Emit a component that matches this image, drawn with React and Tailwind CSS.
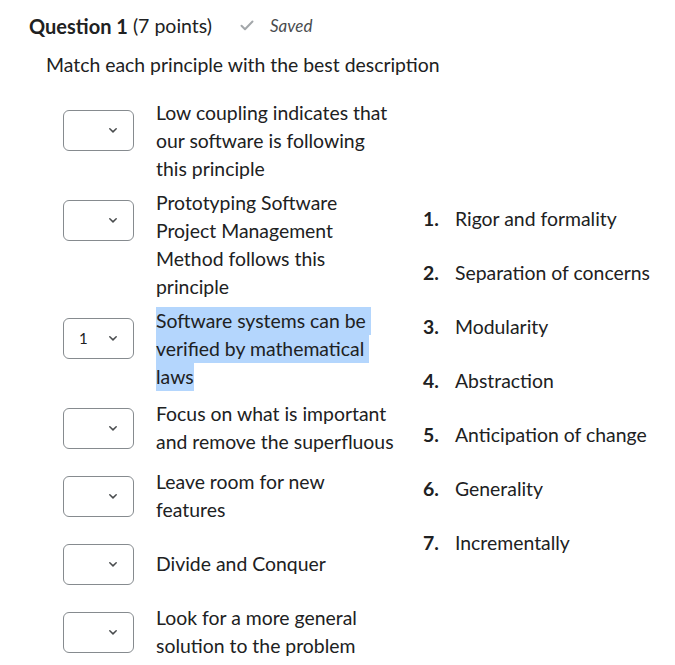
import React from "react";

const rows = [
  { value: "", text: "Low coupling indicates that our software is following this principle" },
  { value: "", text: "Prototyping Software Project Management Method follows this principle" },
  { value: "1", highlight: true },
  { value: "", text: "Focus on what is important and remove the superfluous" },
  { value: "", text: "Leave room for new features" },
  { value: "", text: "Divide and Conquer" },
  { value: "", text: "Look for a more general solution to the problem" },
];

const choices = [
  "Rigor and formality",
  "Separation of concerns",
  "Modularity",
  "Abstraction",
  "Anticipation of change",
  "Generality",
  "Incrementally",
];

const Chevron = () => (
  <svg width="10" height="7" viewBox="0 0 10 7" fill="none">
    <path d="M1.8 1.8 L5 4.9 L8.2 1.8" stroke="#494c4e" strokeWidth="1.5" strokeLinecap="round" strokeLinejoin="round" />
  </svg>
);

const FakeSelect = ({ value }) => (
  <div className="w-[71px] h-[41px] rounded-[6px] border border-[#868b8f] bg-white flex items-center pl-[15px] pr-[15px] justify-between">
    <span className="text-[15px] text-[#202122]">{value}</span>
    <Chevron />
  </div>
);

export default function App() {
  return (
    <div className="bg-white w-[675px] h-[665px] overflow-hidden text-[#202122]" style={{ fontFamily: "Lato, 'Noto Sans', sans-serif" }}>
      {/* header */}
      <div className="flex items-center pl-[29px] pt-[13px] h-[25px] box-content">
        <span className="text-[20px] font-bold">Question 1</span>
        <span className="text-[19.5px] ml-[5px]">(7 points)</span>
        <svg className="ml-[28px]" width="14" height="11" viewBox="0 0 14 11" fill="none">
          <path d="M1.5 5.8 L5 9.2 L12.5 1.5" stroke="#a3a7aa" strokeWidth="2" strokeLinecap="round" strokeLinejoin="round" />
        </svg>
        <span className="ml-[16px] text-[17px] italic text-[#494c4e]">Saved</span>
      </div>

      <p className="pl-[46px] mt-[15px] text-[19.4px] leading-[24px]">Match each principle with the best description</p>

      <div className="flex mt-[19px]">
        {/* left: prompts */}
        <div className="flex flex-col pl-[63px]">
          {rows.map((r, i) => (
            <div key={i} className="flex">
              <div className="py-[13.5px] pr-[22px]">
                <FakeSelect value={r.value} />
              </div>
              <div className="w-[241px] self-center py-[3px] text-[19.4px] leading-[28px]">
                {r.highlight ? (
                  <div className="flex flex-col items-start">
                    <span className="bg-[#b4d6fd] pr-[5px]">Software systems can be</span>
                    <span className="bg-[#b4d6fd] pr-[5px]">verified by mathematical</span>
                    <span className="bg-[#b4d6fd]">laws</span>
                  </div>
                ) : (
                  r.text
                )}
              </div>
            </div>
          ))}
        </div>

        {/* right: answers */}
        <ol className="flex flex-col justify-center gap-[26px] ml-[26px]">
          {choices.map((c, i) => (
            <li key={i} className="flex text-[19.4px] leading-[28px]">
              <span className="w-[32px] font-bold">{i + 1}.</span>
              <span>{c}</span>
            </li>
          ))}
        </ol>
      </div>
    </div>
  );
}
